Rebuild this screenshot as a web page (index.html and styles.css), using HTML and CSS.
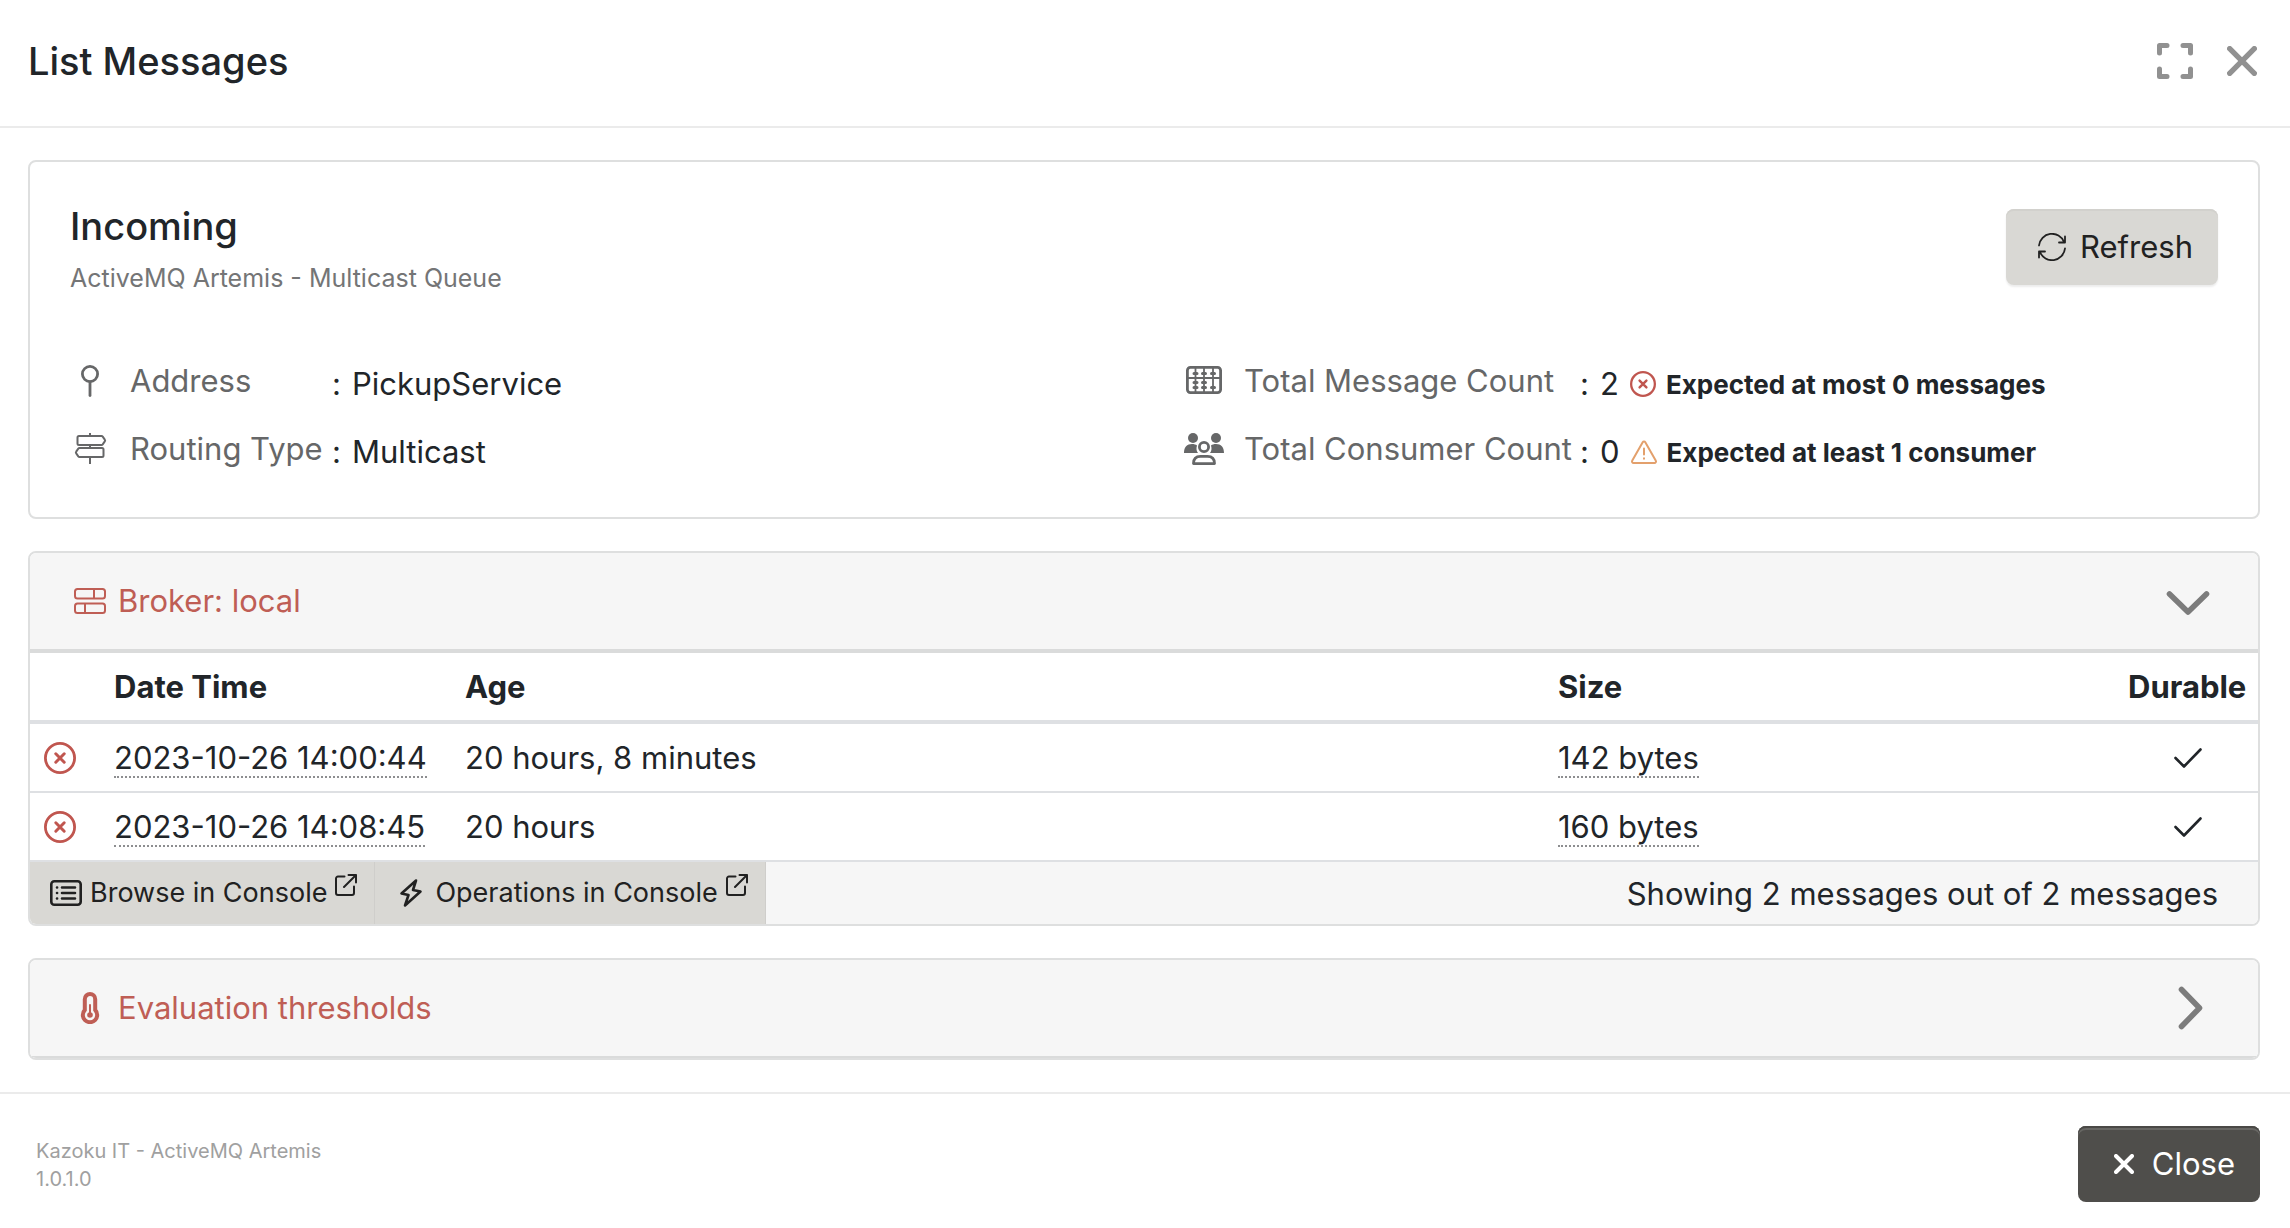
FILE: index.html
```html
<!DOCTYPE html>
<html lang="en">
<head>
<meta charset="UTF-8">
<meta name="viewport" content="width=device-width, initial-scale=1.0">
<title>List Messages</title>
<link rel="stylesheet" href="styles.css">
</head>
<body>

<!-- Shared icons -->
<svg class="icon-defs" aria-hidden="true">
  <symbol id="icon-error" viewBox="0 0 32 32">
    <circle cx="16" cy="16" r="14.6" fill="none" stroke="currentColor" stroke-width="2.8"/>
    <path d="M11.8 11.8l8.4 8.4M20.2 11.8l-8.4 8.4" fill="none" stroke="currentColor" stroke-width="3" stroke-linecap="round"/>
  </symbol>
  <symbol id="icon-check" viewBox="0 0 28 20">
    <path d="M1.5 10l8.5 8.5L26.5 1.5" fill="none" stroke="currentColor" stroke-width="2.6" stroke-linecap="round" stroke-linejoin="round"/>
  </symbol>
  <symbol id="icon-external" viewBox="0 0 22 22">
    <path d="M9.5 2.5H3A2 2 0 0 0 1 4.5V19a2 2 0 0 0 2 2h14a2 2 0 0 0 2-2v-6.5M13.5 1H21v7.5M21 1L9 13" fill="none" stroke="currentColor" stroke-width="2" stroke-linecap="round" stroke-linejoin="round"/>
  </symbol>
</svg>

<header class="modal-header">
  <h1>List Messages</h1>
  <div class="window-buttons">
    <button type="button" class="icon-button" aria-label="Fullscreen">
      <svg width="36" height="36" viewBox="0 0 36 36" fill="none" stroke="currentColor" stroke-width="5" stroke-linecap="round" stroke-linejoin="round">
        <path d="M10 2.5H2.5V10M26 2.5h7.5V10M2.5 26v7.5H10M33.5 26v7.5H26"/>
      </svg>
    </button>
    <button type="button" class="icon-button" aria-label="Close window">
      <svg width="30" height="30" viewBox="0 0 30 30" fill="none" stroke="currentColor" stroke-width="5.4" stroke-linecap="round">
        <path d="M2.7 2.7l24.6 24.6M27.3 2.7L2.7 27.3"/>
      </svg>
    </button>
  </div>
</header>

<main class="modal-body">

  <!-- Queue summary -->
  <section class="card summary">
    <div class="summary-top">
      <div>
        <h2>Incoming</h2>
        <p class="subtitle">ActiveMQ Artemis - Multicast Queue</p>
      </div>
      <button type="button" class="button button-light">
        <svg width="28" height="28" viewBox="0 0 28 28" fill="none" stroke="currentColor" stroke-width="1.8" stroke-linecap="round" stroke-linejoin="round">
          <path d="M1 12.5A13 13 0 0 1 26 9M27 3.5v6h-6M27 15.5A13 13 0 0 1 2 19M1 24.5v-6h6"/>
        </svg>
        Refresh
      </button>
    </div>

    <div class="facts">
      <dl class="fact-list fact-list-queue">
        <div class="fact">
          <dt>
            <svg width="36" height="36" viewBox="0 0 36 36" fill="none" stroke="currentColor" stroke-width="2.8" stroke-linecap="round">
              <circle cx="18" cy="11" r="7.6"/>
              <path d="M18 19v13.5"/>
            </svg>
            Address
          </dt>
          <dd>PickupService</dd>
        </div>
        <div class="fact">
          <dt>
            <svg width="36" height="36" viewBox="0 0 36 36" fill="none" stroke="currentColor" stroke-width="2" stroke-linejoin="round">
              <path d="M18 2v3M18 14v3M18 26v7"/>
              <path d="M7 5h22.5a1.5 1.5 0 0 1 1.2.6l2.1 3a1.5 1.5 0 0 1 0 1.8l-2.1 3a1.5 1.5 0 0 1-1.2.6H7a1.5 1.5 0 0 1-1.5-1.5v-6A1.5 1.5 0 0 1 7 5z"/>
              <path d="M30 17H7.5a1.5 1.5 0 0 0-1.2.6l-2.1 3a1.5 1.5 0 0 0 0 1.8l2.1 3a1.5 1.5 0 0 0 1.2.6H30a1.5 1.5 0 0 0 1.5-1.5v-6A1.5 1.5 0 0 0 30 17z"/>
            </svg>
            Routing Type
          </dt>
          <dd>Multicast</dd>
        </div>
      </dl>

      <dl class="fact-list fact-list-count">
        <div class="fact">
          <dt>
            <svg width="40" height="36" viewBox="0 0 40 36" fill="none" stroke="currentColor" stroke-width="2.8">
              <rect x="3.4" y="4.4" width="33.2" height="25.2" rx="3"/>
              <path d="M3 15h34M11.5 4v26M20 4v26M29 4v26" stroke-width="1.8"/>
              <path d="M10 10.5h3M18.5 10.5h3M27.5 10.5h3M10 19.5h3M10 24.5h3M18.5 19.5h3M18.5 24.5h3M27.5 24.5h3" stroke-width="3" stroke-linecap="round"/>
            </svg>
            Total Message Count
          </dt>
          <dd>2
            <span class="alert">
              <svg class="error" width="26" height="26"><use href="#icon-error"/></svg>
              <strong>Expected at most 0 messages</strong>
            </span>
          </dd>
        </div>
        <div class="fact">
          <dt>
            <svg width="40" height="36" viewBox="0 0 40 36" fill="currentColor">
              <circle cx="9" cy="7" r="5"/>
              <circle cx="32" cy="7" r="5"/>
              <path d="M0 22c0-6 3-9 8-9 2 0 4 .5 5 1.5-1 3-.5 5.5 1 7.5zM40 22c0-6-3-9-8-9-2 0-4 .5-5 1.5 1 3 .5 5.5-1 7.5z"/>
              <g fill="none" stroke="currentColor" stroke-width="2.8" stroke-linejoin="round">
                <circle cx="20" cy="16" r="4.6"/>
                <path d="M9.5 32.6c0-5 2.5-7.2 7-7.2h7c4.5 0 7 2.2 7 7.2z"/>
              </g>
            </svg>
            Total Consumer Count
          </dt>
          <dd>0
            <span class="alert">
              <svg class="warning" width="26" height="26" viewBox="0 0 26 26" fill="none" stroke="currentColor" stroke-width="2" stroke-linecap="round" stroke-linejoin="round">
                <path d="M11.7 3.2L1.3 21.5A1.6 1.6 0 0 0 2.7 24h20.6a1.6 1.6 0 0 0 1.4-2.5L14.3 3.2a1.5 1.5 0 0 0-2.6 0zM13 9.5v6M13 19.2v.6"/>
              </svg>
              <strong>Expected at least 1 consumer</strong>
            </span>
          </dd>
        </div>
      </dl>
    </div>
  </section>

  <!-- Messages on the local broker -->
  <section class="card">
    <button type="button" class="panel-toggle" aria-expanded="true">
      <svg width="32" height="26" viewBox="0 0 32 26" fill="none" stroke="currentColor" stroke-width="2">
        <rect x="1" y="1" width="30" height="9.5" rx="2.5"/>
        <path d="M20 1v9M11 15.5v9"/>
        <rect x="1" y="15.5" width="30" height="9.5" rx="2.5"/>
      </svg>
      <span>Broker: local</span>
      <svg class="chevron" width="44" height="44" viewBox="0 0 44 44" fill="none" stroke="currentColor" stroke-width="5.6" stroke-linecap="round" stroke-linejoin="round">
        <path d="M3.5 15L22 33l18.5-18"/>
      </svg>
    </button>
    <table class="messages">
      <thead>
        <tr>
          <th class="col-status"></th>
          <th class="col-date">Date Time</th>
          <th>Age</th>
          <th class="col-size">Size</th>
          <th class="col-durable">Durable</th>
        </tr>
      </thead>
      <tbody>
        <tr>
          <td class="col-status"><svg class="error" width="32" height="32" role="img" aria-label="Error"><use href="#icon-error"/></svg></td>
          <td><span class="hint">2023-10-26 14:00:44</span></td>
          <td>20 hours, 8 minutes</td>
          <td><span class="hint">142 bytes</span></td>
          <td class="col-durable"><svg width="28" height="20" role="img" aria-label="Yes"><use href="#icon-check"/></svg></td>
        </tr>
        <tr>
          <td class="col-status"><svg class="error" width="32" height="32" role="img" aria-label="Error"><use href="#icon-error"/></svg></td>
          <td><span class="hint">2023-10-26 14:08:45</span></td>
          <td>20 hours</td>
          <td><span class="hint">160 bytes</span></td>
          <td class="col-durable"><svg width="28" height="20" role="img" aria-label="Yes"><use href="#icon-check"/></svg></td>
        </tr>
      </tbody>
    </table>
    <div class="panel-footer">
      <a href="#browse" class="console-link">
        <svg width="32" height="26" viewBox="0 0 32 26" fill="none" stroke="currentColor" stroke-width="2.6" stroke-linecap="round">
          <rect x="1.3" y="1.3" width="29.4" height="23.4" rx="3"/>
          <path d="M12 7.5h13M12 13h13M12 18.5h13M7 7.5h.1M7 13h.1M7 18.5h.1"/>
        </svg>
        <span>Browse in Console</span>
        <svg class="external" width="22" height="22"><use href="#icon-external"/></svg>
      </a>
      <a href="#operations" class="console-link">
        <svg width="32" height="28" viewBox="-5 0 32 28" fill="none" stroke="currentColor" stroke-width="2.6" stroke-linejoin="round">
          <path d="M16 1.5L1.5 14.5l7 1.5L5 26.5l15.5-14L13 11z"/>
        </svg>
        <span>Operations in Console</span>
        <svg class="external" width="22" height="22"><use href="#icon-external"/></svg>
      </a>
      <span class="panel-total">Showing 2 messages out of 2 messages</span>
    </div>
  </section>

  <!-- Thresholds, collapsed -->
  <section class="card">
    <button type="button" class="panel-toggle collapsed" aria-expanded="false">
      <svg width="32" height="32" viewBox="0 0 32 32" fill="none" stroke="currentColor" stroke-width="4" stroke-linecap="round">
        <path d="M10.8 18V7.2a5.2 5.2 0 0 1 10.4 0V18a7.2 7.2 0 1 1-10.4 0z"/>
        <path d="M16 13v9" stroke-width="2"/>
        <circle cx="16" cy="23" r="2.8" fill="currentColor" stroke="none"/>
      </svg>
      <span>Evaluation thresholds</span>
      <svg class="chevron" width="44" height="44" viewBox="0 0 44 44" fill="none" stroke="currentColor" stroke-width="5.6" stroke-linecap="round" stroke-linejoin="round">
        <path d="M15.5 3.5l18 18.5-18 18.5"/>
      </svg>
    </button>
  </section>

</main>

<footer class="modal-footer">
  <p>Kazoku IT - ActiveMQ Artemis<br>1.0.1.0</p>
  <button type="button" class="button button-dark">
    <svg width="20" height="20" viewBox="0 0 20 20" fill="none" stroke="currentColor" stroke-width="4" stroke-linecap="round">
      <path d="M2 2l16 16M18 2L2 18"/>
    </svg>
    Close
  </button>
</footer>

</body>
</html>
```
FILE: styles.css
```css
* {
  box-sizing: border-box;
}
body {
  margin: 0;
  background: #fff;
  color: #212529;
  font-family: Inter, "Liberation Sans", sans-serif;
  font-size: 31px;
  line-height: 48px;
}
h1, h2, p, dl, dd {
  margin: 0;
}
h1, h2 {
  font-size: 38px;
  font-weight: 500;
  line-height: 48px;
}
svg {
  flex-shrink: 0;
}
button {
  font: inherit;
  color: inherit;
  cursor: pointer;
}
.icon-defs {
  display: none;
}
.error {
  color: #c0564f;
}
.warning {
  color: #e3a06c;
}

/* Header */
.modal-header {
  display: flex;
  justify-content: space-between;
  align-items: center;
  height: 128px;
  padding: 0 33px 4px 28px;
  border-bottom: 2px solid #ebebeb;
}
.window-buttons {
  display: flex;
  align-items: center;
  gap: 34px;
}
.icon-button {
  display: flex;
  padding: 0;
  border: none;
  background: none;
  color: #919191;
}

/* Body */
.modal-body {
  display: flex;
  flex-direction: column;
  gap: 32px;
  padding: 32px 30px 32px 28px;
}
.card {
  border: 2px solid #dedfdf;
  border-radius: 8px;
  overflow: hidden;
}
.button {
  display: flex;
  align-items: center;
  height: 76px;
  padding: 0 25px 0 32px;
  border: none;
  border-radius: 8px;
  gap: 14px;
}
.button-light {
  margin-top: 7px;
  background: #d9d8d4;
  color: #212121;
  box-shadow: inset 0 2px 0 #d2d1cd, 0 2px 2px rgba(0, 0, 0, 0.08);
}
.button-dark {
  background: #4f4e4b;
  color: #fff;
  padding-left: 36px;
  gap: 18px;
  box-shadow: inset 0 2px 0 #4a4946, inset 0 4px 0 #686764;
}

/* Summary card */
.summary {
  padding: 40px 40px 41px;
}
.summary-top {
  display: flex;
  justify-content: space-between;
  align-items: flex-start;
}
.subtitle {
  padding-top: 4px;
  color: #747576;
  font-size: 25px;
}
.facts {
  display: grid;
  grid-template-columns: 1fr 1fr;
  column-gap: 78px;
  margin-top: 55px;
  padding-left: 2px;
}
.fact-list {
  display: flex;
  flex-direction: column;
  gap: 17px;
}
.fact {
  display: flex;
  align-items: flex-start;
}
.fact dt {
  display: flex;
  align-items: center;
  gap: 22px;
  color: #666768;
}
.fact-list-queue dt {
  width: 260px;
}
.fact-list-count dt {
  width: 396px;
  gap: 20px;
}
.fact dd {
  display: flex;
  align-items: center;
  padding-top: 3px;
}
.fact dd::before {
  content: ":";
  width: 20px;
}
.alert {
  display: flex;
  align-items: center;
  gap: 10px;
  margin-left: 11px;
}
.alert strong {
  padding-top: 2px;
  font-size: 26px;
  font-weight: 700;
  line-height: 46px;
}

/* Panels */
.panel-toggle {
  display: flex;
  align-items: center;
  gap: 12px;
  width: 100%;
  height: 100px;
  padding: 0 48px 0 44px;
  border: none;
  border-bottom: 4px solid #dadbdb;
  background: #f6f6f6;
  color: #bf5e55;
}
.panel-toggle.collapsed {
  height: 98px;
  border-bottom-width: 2px;
}
.chevron {
  margin-left: auto;
  color: #7c7c7c;
}
.messages {
  width: 100%;
  table-layout: fixed;
  border-collapse: separate;
  border-spacing: 0;
}
.messages th, .messages td {
  padding: 10px 10px 9px;
  text-align: left;
  vertical-align: middle;
}
.messages th {
  font-weight: 700;
  border-bottom: 4px solid #dee0e3;
}
.messages td {
  border-bottom: 2px solid #dee0e3;
}
.messages svg {
  display: block;
}
.messages .col-status {
  width: 74px;
  padding-left: 14px;
}
.col-date {
  width: 351px;
}
.col-size {
  width: 570px;
}
.col-durable {
  width: 140px;
}
.col-durable svg {
  margin: 0 auto;
}
.hint {
  border-bottom: 2px dotted #8d8e90;
}
.panel-footer {
  display: flex;
  align-items: stretch;
  height: 62px;
  background: #f6f6f6;
}
.console-link {
  display: flex;
  align-items: center;
  gap: 8px;
  padding: 0 17px 0 20px;
  border-right: 1px solid #cfcecb;
  background: #d9d8d4;
  color: #212121;
  font-size: 27px;
  text-decoration: none;
}
.external {
  align-self: flex-start;
  margin-top: 12px;
}
.panel-total {
  margin-left: auto;
  padding: 8px 40px 0 0;
}

/* Footer */
.modal-footer {
  display: flex;
  justify-content: space-between;
  padding: 32px 30px 26px 36px;
  border-top: 2px solid #ebebeb;
}
.modal-footer p {
  padding-top: 11px;
  color: #a0a0a0;
  font-size: 20px;
  line-height: 28px;
}
```
